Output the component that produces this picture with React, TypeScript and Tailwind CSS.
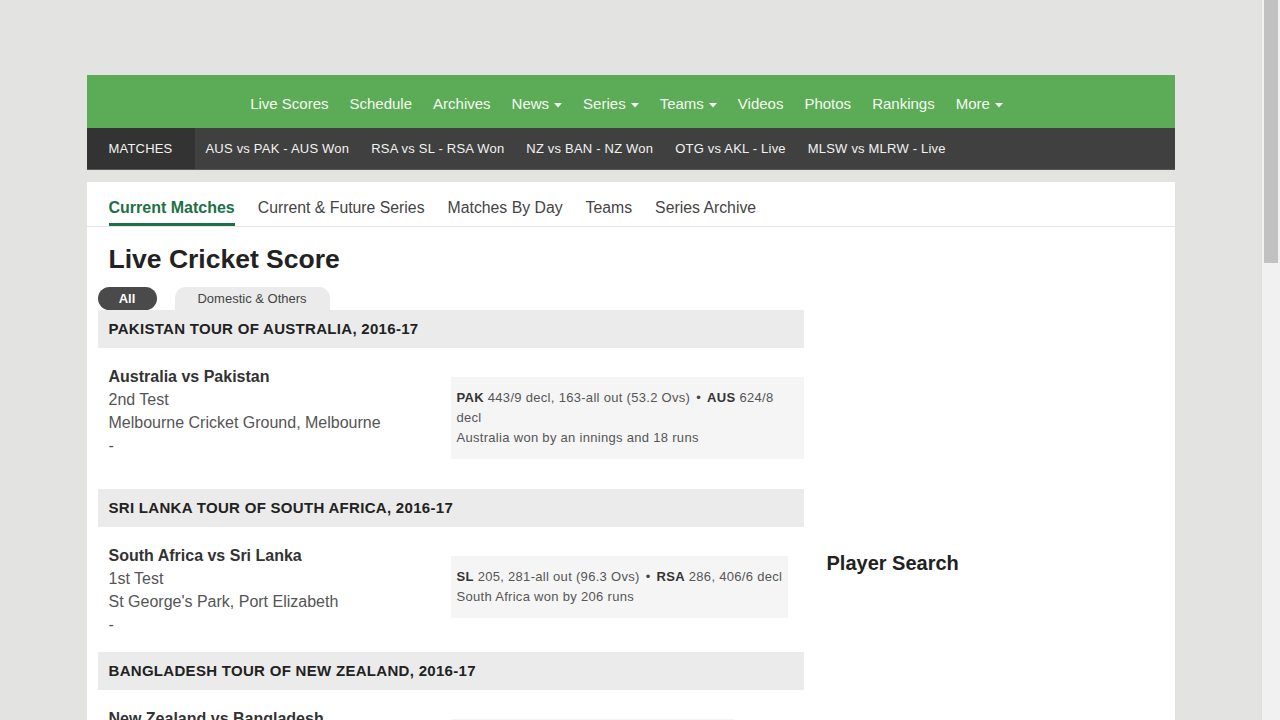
import React from "react";

const navItems = [
  { label: "Live Scores" },
  { label: "Schedule" },
  { label: "Archives" },
  { label: "News", caret: true },
  { label: "Series", caret: true },
  { label: "Teams", caret: true },
  { label: "Videos" },
  { label: "Photos" },
  { label: "Rankings" },
  { label: "More", caret: true },
];

const tickers = [
  "AUS vs PAK - AUS Won",
  "RSA vs SL - RSA Won",
  "NZ vs BAN - NZ Won",
  "OTG vs AKL - Live",
  "MLSW vs MLRW - Live",
];

const tabs = ["Current Matches", "Current & Future Series", "Matches By Day", "Teams", "Series Archive"];

type Match = {
  series: string;
  title: string;
  desc: string;
  venue: string;
  teamA: string;
  scoreA: string;
  teamB: string;
  scoreB: string;
  result: string;
};

const matches: Match[] = [
  {
    series: "PAKISTAN TOUR OF AUSTRALIA, 2016-17",
    title: "Australia vs Pakistan",
    desc: "2nd Test",
    venue: "Melbourne Cricket Ground, Melbourne",
    teamA: "PAK",
    scoreA: "443/9 decl, 163-all out (53.2 Ovs)",
    teamB: "AUS",
    scoreB: "624/8 decl",
    result: "Australia won by an innings and 18 runs",
  },
  {
    series: "SRI LANKA TOUR OF SOUTH AFRICA, 2016-17",
    title: "South Africa vs Sri Lanka",
    desc: "1st Test",
    venue: "St George's Park, Port Elizabeth",
    teamA: "SL",
    scoreA: "205, 281-all out (96.3 Ovs)",
    teamB: "RSA",
    scoreB: "286, 406/6 decl",
    result: "South Africa won by 206 runs",
  },
  {
    series: "BANGLADESH TOUR OF NEW ZEALAND, 2016-17",
    title: "New Zealand vs Bangladesh",
    desc: "1st Test",
    venue: "Basin Reserve, Wellington",
    teamA: "BAN",
    scoreA: "595/8 decl, 160-all out",
    teamB: "NZ",
    scoreB: "539, 217/3",
    result: "New Zealand won by 7 wkts",
  },
];

const Caret = () => (
  <svg width="8" height="5" viewBox="0 0 8 5" className="ml-[5px] mt-[2px]">
    <path d="M0 0 L8 0 L4 4.5 Z" fill="currentColor" />
  </svg>
);

const MatchBlock = ({ m }: { m: Match }) => (
  <div>
    <div className="h-[38px] bg-[#ebebeb] pl-[11px] flex items-center text-[15px] font-bold tracking-[0.3px] text-[#222]">
      {m.series}
    </div>
    <div className="flex">
      <div className="w-[353px] pl-[11px] pt-[17px] pb-[16px] leading-[23px] text-[16px]">
        <div className="font-bold text-[#333]">{m.title}</div>
        <div className="text-[#555]">{m.desc}</div>
        <div className="text-[#555]">{m.venue}</div>
        <div className="text-[#555]">-</div>
      </div>
      <div className="w-[353px] pt-[29px] pb-[30px]">
        <div className="inline-block bg-[#f5f5f5] px-[6px] py-[11px] text-[13px] leading-[20px] tracking-[0.3px] text-[#555]">
          <div>
            <span className="font-bold text-[#333]">{m.teamA}</span> {m.scoreA}
            <span className="mx-[6px] text-[#444]">•</span>
            <span className="font-bold text-[#333]">{m.teamB}</span> {m.scoreB}
          </div>
          <div>{m.result}</div>
        </div>
      </div>
    </div>
  </div>
);

export default function App() {
  return (
    <div className="h-[720px] w-[1280px] overflow-hidden flex font-['Liberation_Sans',Arial,sans-serif]">
      <div className="flex-1 bg-[#e3e4e2] pt-[75px]">
        <div className="w-[1088px] mx-auto">
          <nav className="h-[53px] bg-[#5cab57] flex items-center justify-center gap-[21px] pt-[6px] pr-[8px] text-[15px] text-[#f4fbf2]">
            {navItems.map((n) => (
              <span key={n.label} className="flex items-center">
                {n.label}
                {n.caret && <Caret />}
              </span>
            ))}
          </nav>
          <div className="h-[42px] bg-[#404040] border-b border-[#5a5a5a] flex text-[13px] tracking-[0.2px] text-[#f2f2f2]">
            <div className="bg-[#333333] px-[22px] flex items-center">MATCHES</div>
            {tickers.map((t) => (
              <div key={t} className="px-[11px] flex items-center">
                {t}
              </div>
            ))}
          </div>
          <div className="mt-[12px] bg-white h-[600px]">
            <div className="h-[45px] border-b border-[#e6e6e6] px-[22px] flex gap-[23px]">
              {tabs.map((t, i) => (
                <div key={t} className="flex flex-col pt-[16px]">
                  <span
                    className={
                      i === 0
                        ? "leading-[20px] text-[16px] font-bold text-[#1d7047]"
                        : "leading-[20px] text-[15.8px] text-[#444]"
                    }
                  >
                    {t}
                  </span>
                  <span className={i === 0 ? "mt-[5px] h-[3px] bg-[#1d7047]" : "mt-[5px] h-[3px]"} />
                </div>
              ))}
            </div>
            <div className="flex px-[11px]">
              <div className="w-[706px]">
                <h1 className="pl-[11px] pt-[17px] text-[26.5px] leading-[30px] font-bold text-[#222]">Live Cricket Score</h1>
                <div className="mt-[13px] flex items-end gap-[18px] text-[13px]">
                  <span className="h-[23px] w-[59px] rounded-full bg-[#4a4a4a] text-white font-bold flex items-center justify-center">
                    All
                  </span>
                  <span className="h-[23px] w-[155px] rounded-t-[11px] bg-[#ebebeb] text-[#444] flex items-center justify-center">
                    Domestic &amp; Others
                  </span>
                </div>
                {matches.map((m) => (
                  <MatchBlock key={m.series} m={m} />
                ))}
              </div>
              <div className="ml-[23px] flex-1 pt-[324px]">
                <h2 className="text-[20px] leading-[24px] font-bold text-[#222]">Player Search</h2>
              </div>
            </div>
          </div>
        </div>
      </div>
      <div className="w-[19px] bg-[#f1f1f1] border-l border-[#dcdcdc] pl-[2px]">
        <div className="w-[14px] h-[263px] bg-[#c1c1c1]" />
      </div>
    </div>
  );
}
